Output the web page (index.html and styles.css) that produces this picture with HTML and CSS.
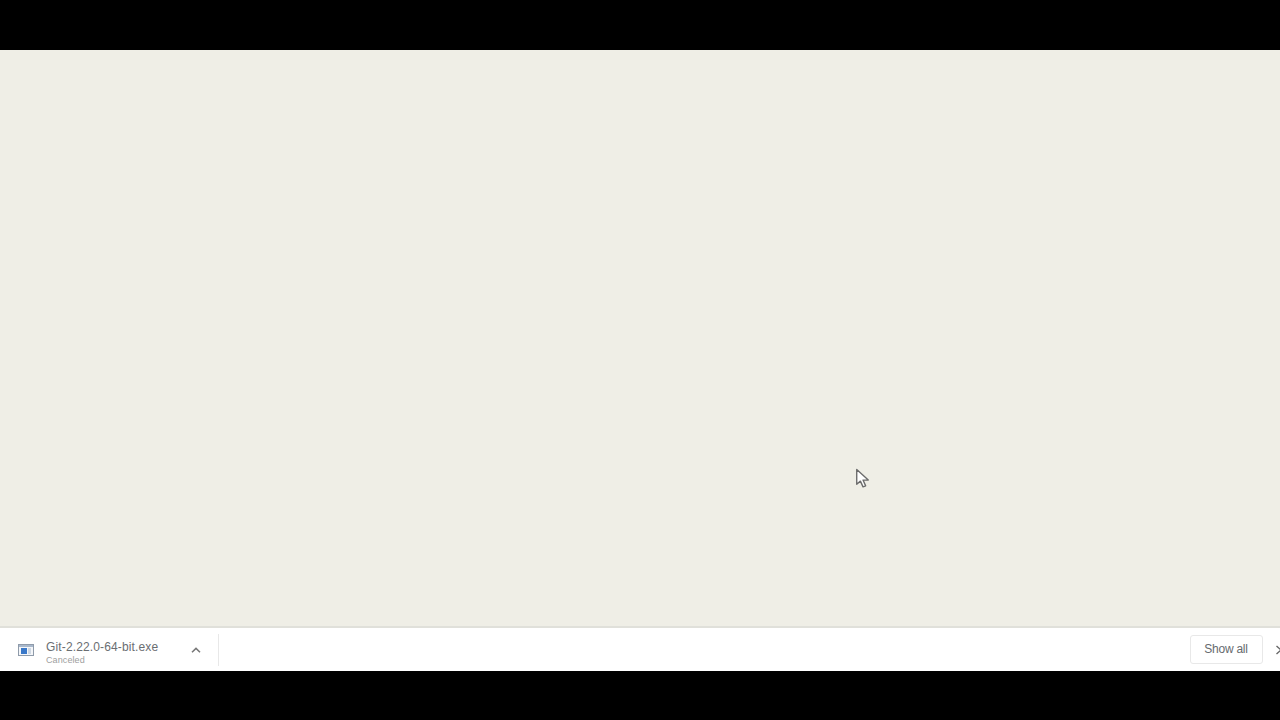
FILE: index.html
```html
<!DOCTYPE html>
<html lang="en">
<head>
<meta charset="utf-8">
<title>Download bar</title>
<link rel="stylesheet" href="styles.css">
</head>
<body>
<div class="letterbox"></div>
<main class="content">
  <svg class="cursor" width="15" height="21" viewBox="0 0 14 20">
    <path d="M1.5 1.5 L1.5 15.5 L5 12.5 L7.5 18 L10 17 L7.5 11.5 L12.5 11.5 Z" fill="#fff" stroke="#6b6b6b" stroke-width="1.3" stroke-linejoin="round"/>
  </svg>
</main>
<footer class="shelf">
  <div class="item">
    <svg class="file-icon" width="16" height="14" viewBox="0 0 16 14">
      <rect x="0.5" y="1.5" width="15" height="11" fill="#f4f6f9" stroke="#8f9baa"/>
      <rect x="1" y="2" width="14" height="2" fill="#a9b8cb"/>
      <rect x="3" y="5" width="6" height="6" fill="#3a78c8"/>
      <rect x="10" y="5" width="3" height="6" fill="#cfd8e3"/>
    </svg>
    <div class="names">
      <span class="name">Git-2.22.0-64-bit.exe</span>
      <span class="status">Canceled</span>
    </div>
    <svg class="chevron" width="10" height="6" viewBox="0 0 10 6">
      <path d="M1 5.2 L5 1.4 L9 5.2" fill="none" stroke="#777" stroke-width="1.5"/>
    </svg>
  </div>
  <div class="spacer"></div>
  <button class="show-all">Show all</button>
  <svg class="close" width="5" height="10" viewBox="0 0 5 10">
    <path d="M0.5 1 L5 5 M0.5 9 L5 5" fill="none" stroke="#666" stroke-width="1.4"/>
  </svg>
</footer>
<div class="letterbox-bottom"></div>
</body>
</html>
```

FILE: styles.css
```css
* { box-sizing: border-box; }
html, body { margin: 0; padding: 0; }
body {
  width: 1280px;
  height: 720px;
  overflow: hidden;
  display: flex;
  flex-direction: column;
  background: #000;
  font-family: "Liberation Sans", Arial, sans-serif;
}
.letterbox { height: 50px; background: #000; flex: none; }
.letterbox-bottom { height: 49px; background: #000; flex: none; }
.content {
  height: 576px;
  flex: none;
  position: relative;
  background: #efeee6;
}
.cursor { position: absolute; left: 855px; top: 418px; }
.shelf {
  height: 45px;
  flex: none;
  display: flex;
  align-items: center;
  background: #fff;
  border-top: 2px solid #e0e0da;
}
.item {
  width: 219px;
  height: 32px;
  flex: none;
  display: flex;
  align-items: center;
  padding-left: 18px;
  border-right: 1px solid #e8e8e8;
}
.file-icon { flex: none; margin-right: 12px; }
.names {
  width: 129px;
  padding-top: 6px;
  display: flex;
  flex-direction: column;
  flex: none;
  color: #6a6e72;
}
.name { font-size: 12px; line-height: 14px; letter-spacing: 0.14px; }
.status { font-size: 9px; line-height: 12px; letter-spacing: 0.1px; color: #a0a0a0; }
.chevron { flex: none; margin-left: 16px; }
.spacer { flex: 1; }
.show-all {
  width: 73px;
  height: 29px;
  flex: none;
  padding: 0 1px 1px 0;
  margin-right: 13px;
  background: #fff;
  border: 1px solid #e8e8e8;
  border-radius: 3px;
  font-family: "Liberation Sans", Arial, sans-serif;
  font-size: 12px;
  font-weight: 400;
  letter-spacing: -0.25px;
  color: #666a6e;
}
.close { flex: none; margin-right: -1px; }
```
